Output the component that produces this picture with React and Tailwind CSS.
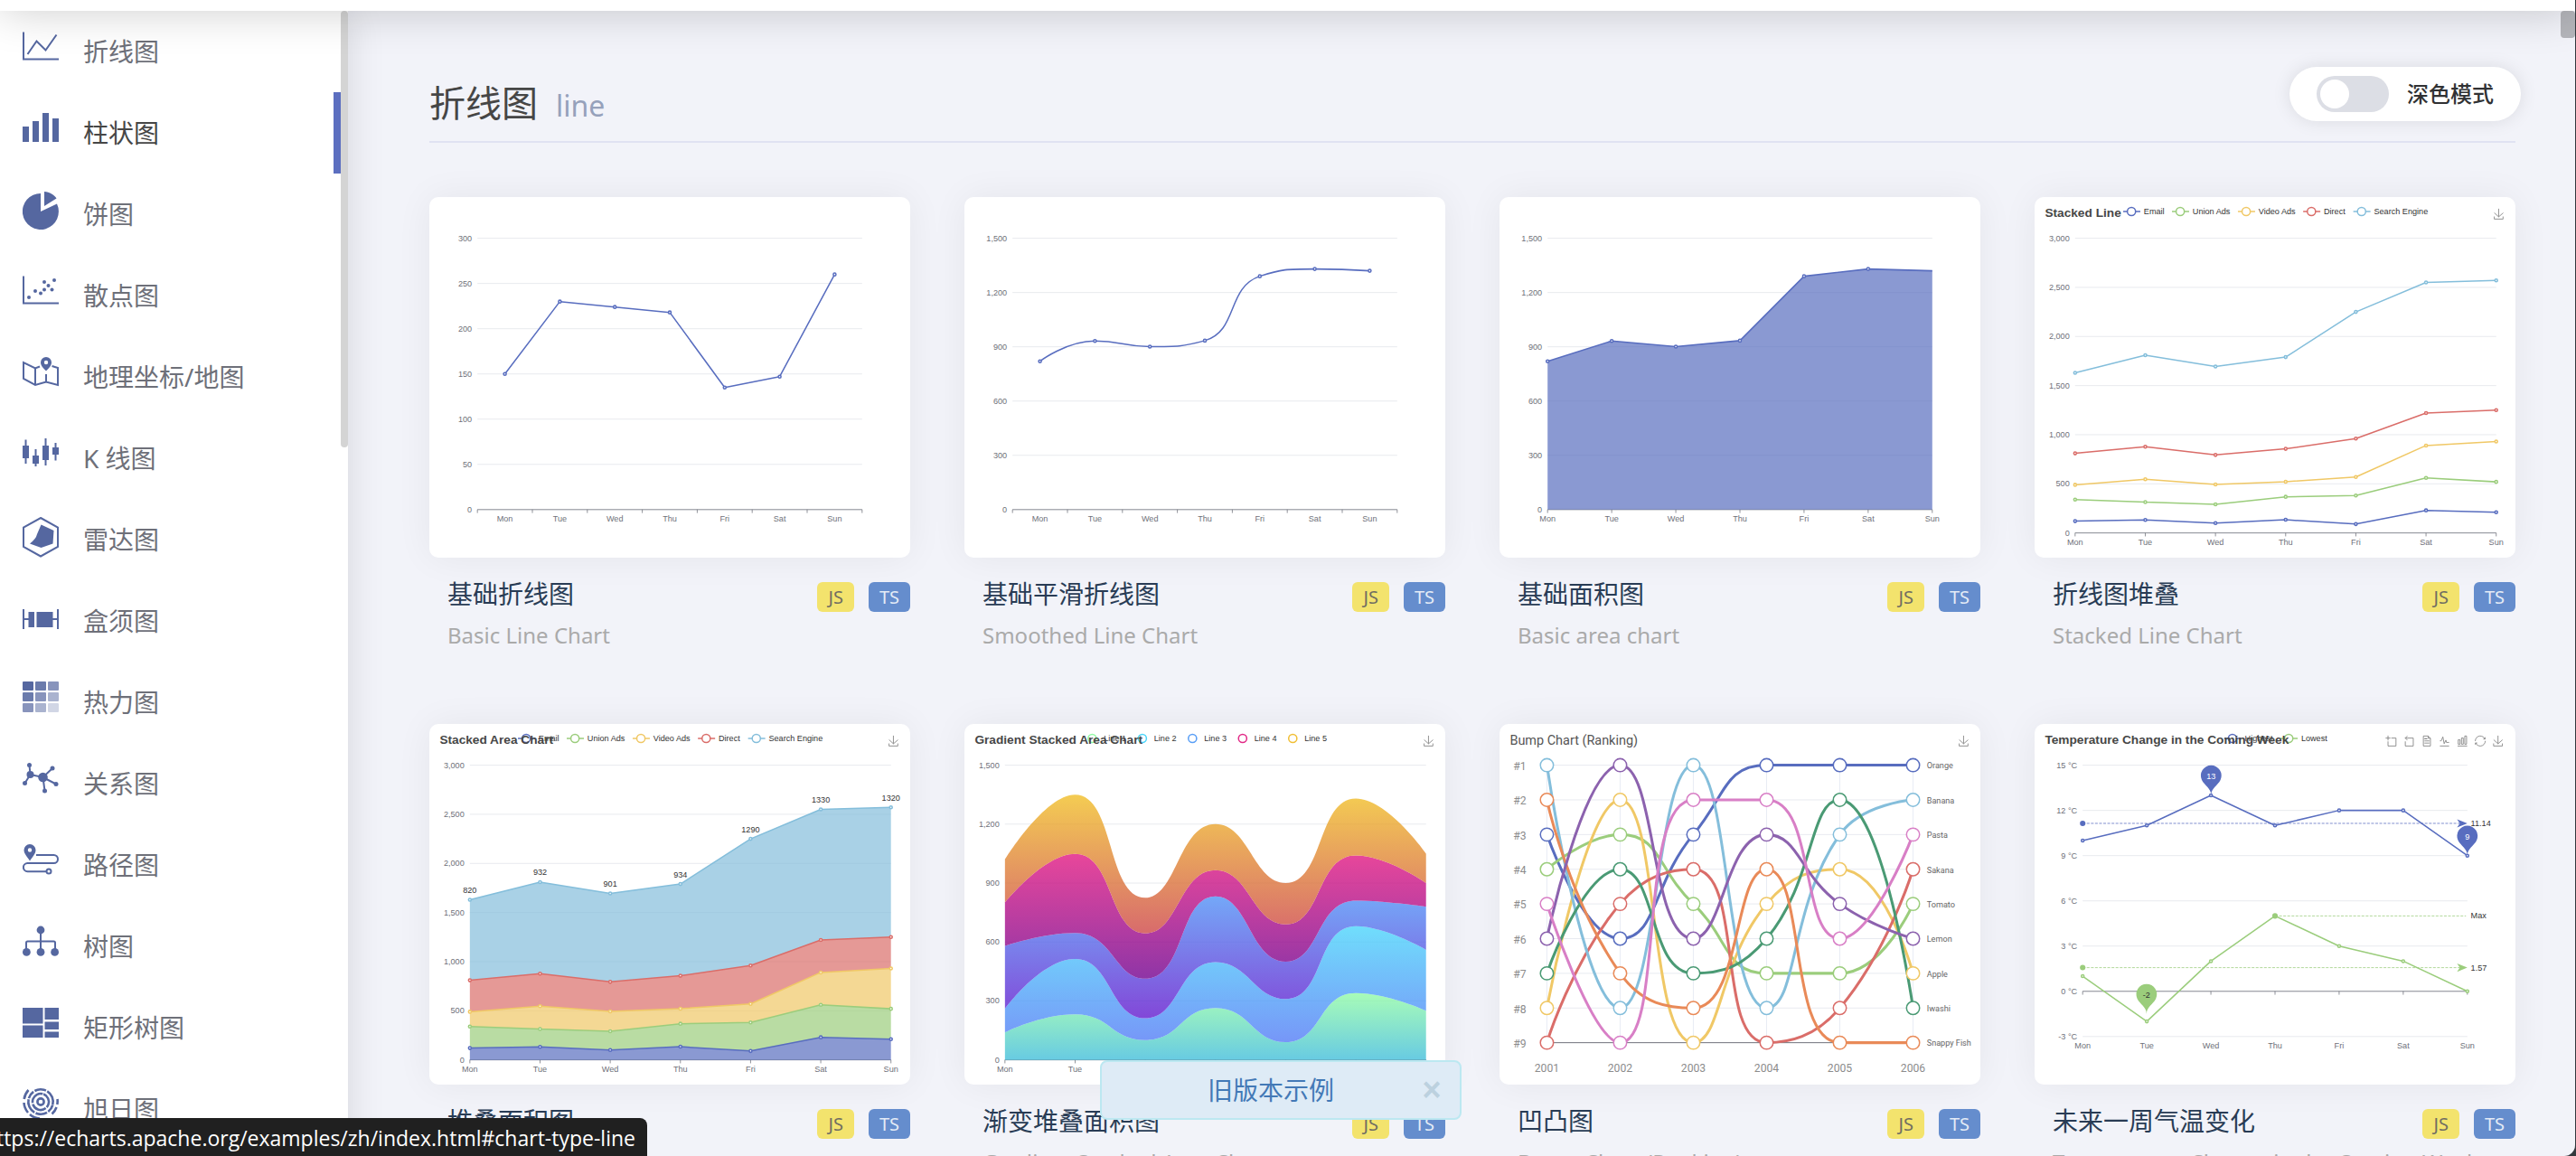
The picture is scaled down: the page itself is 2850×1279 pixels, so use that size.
import React from "react";

const DAYS = ["Mon", "Tue", "Wed", "Thu", "Fri", "Sat", "Sun"];
const COLORS = ["#586dbf", "#9bcd7c", "#f0c866", "#da6d69", "#84bedb", "#4a9a74", "#e98a58", "#8c62ae", "#d87fc6"];

const STACK = [
  { name: "Email", x: 129, data: [120, 132, 101, 134, 90, 230, 210] },
  { name: "Union Ads", x: 200, data: [220, 182, 191, 234, 290, 330, 310] },
  { name: "Video Ads", x: 296, data: [150, 232, 201, 154, 190, 330, 410] },
  { name: "Direct", x: 391, data: [320, 332, 301, 334, 390, 330, 320] },
  { name: "Search Engine", x: 464, data: [820, 932, 901, 934, 1290, 1330, 1320] },
];

const GRADIENT = [
  { name: "Line 1", color: "#92fba6", from: "rgb(146,251,166)", to: "rgb(66,190,219)", data: [140, 232, 101, 264, 90, 340, 250] },
  { name: "Line 2", color: "#4cd5fb", from: "rgb(76,213,251)", to: "rgb(84,124,246)", data: [120, 282, 111, 234, 220, 340, 310] },
  { name: "Line 3", color: "#5a9ff6", from: "rgb(81,146,246)", to: "rgb(99,25,206)", data: [320, 132, 201, 334, 190, 130, 220] },
  { name: "Line 4", color: "#e22a87", from: "rgb(226,24,129)", to: "rgb(115,2,144)", data: [220, 402, 231, 134, 190, 230, 120] },
  { name: "Line 5", color: "#f1bf36", from: "rgb(241,191,39)", to: "rgb(206,70,71)", data: [220, 302, 181, 234, 210, 290, 150] },
];

const RANKING = [
  { name: "Orange", color: COLORS[0], data: [3, 6, 3, 1, 1, 1] },
  { name: "Tomato", color: COLORS[1], data: [4, 3, 5, 7, 7, 5] },
  { name: "Apple", color: COLORS[2], data: [8, 2, 9, 5, 4, 7] },
  { name: "Sakana", color: COLORS[3], data: [9, 5, 4, 9, 8, 4] },
  { name: "Banana", color: COLORS[4], data: [1, 8, 1, 8, 3, 2] },
  { name: "Iwashi", color: COLORS[5], data: [7, 4, 7, 6, 2, 8] },
  { name: "Snappy Fish", color: COLORS[6], data: [2, 7, 8, 4, 9, 9] },
  { name: "Lemon", color: COLORS[7], data: [6, 1, 6, 3, 5, 6] },
  { name: "Pasta", color: COLORS[8], data: [5, 9, 2, 2, 6, 3] },
];

// paths are drawn on a 60 unit canvas
const TOOLS = {
  zoom: "M0,13.5h26.9 M13.5,26.9V0 M32.1,13.5H58V58H13.5 V32.1",
  back: "M22,1.4L9.9,13.5l12.3,12.3 M10.3,13.5H54.9v44.6 H10.3v-26",
  dataView: "M17.5,17.3H33 M17.5,17.3H33 M45.4,29.5h-28 M11.5,2v56H51V14.8L38.4,2H11.5z M38.4,2.2v12.7H51 M45.4,41.7h-28",
  line: "M4.1,28.9h7.1l9.3-22l7.4,38l9.7-19.7l3,12.8h14.9M4.1,58h51.4",
  bar: "M6.7,22.9h10V48h-10V22.9zM24.9,13h10v35h-10V13zM43.2,2h10v46h-10V2zM3.1,58h53.7",
  restore: "M47,18.9h9.8V8.7 M56.3,20.1 C52.1,9,40.5,0.6,26.8,2.1C12.6,3.7,1.6,16.2,2.1,30.6 M13,41.1H3.1v10.2 M3.7,39.9c4.2,11.1,15.8,19.5,29.5,18 c14.2-1.6,25.2-14.1,24.7-28.5",
  save: "M4.7,22.9L29.3,45.5L54.7,23.4M4.6,43.6L4.6,58L53.8,58L53.8,43.6M29.2,45.1L29.2,0",
};

const clamp = (v, a, b) => Math.min(Math.max(v, Math.min(a, b)), Math.max(a, b));

function straight(points) {
  return points.map((p) => p.join(",")).join("L");
}

// bezier segments through all points, control points never leave the segment's box
function smooth(points, s = 0.5) {
  let d = points[0].join(",");
  let c0 = points[0];
  for (let i = 1; i < points.length; i++) {
    const [px, py] = points[i - 1];
    const [x, y] = points[i];
    let c1 = [x, y];
    let next = [x, y];
    if (i < points.length - 1) {
      const [nx, ny] = points[i + 1];
      const lenPrev = Math.hypot(x - px, y - py);
      const lenNext = Math.hypot(nx - x, ny - y);
      const ratio = lenNext / (lenNext + lenPrev);
      next = [clamp(x + (nx - px) * s * ratio, x, nx), clamp(y + (ny - py) * s * ratio, y, ny)];
      c1 = [x - ((next[0] - x) * lenPrev) / lenNext, y - ((next[1] - y) * lenPrev) / lenNext];
      c1 = [clamp(c1[0], px, x), clamp(c1[1], py, y)];
      next = [x + ((x - c1[0]) * lenNext) / lenPrev, y + ((y - c1[1]) * lenNext) / lenPrev];
    }
    d += `C${c0.join(",")} ${c1.join(",")} ${x},${y}`;
    c0 = next;
  }
  return d;
}

function stackPoints(series, toX, toY) {
  const sum = DAYS.map(() => 0);
  return series.map((item) => {
    return item.data.map((v, i) => {
      sum[i] += v;
      return [toX(i), toY(sum[i])];
    });
  });
}

function Chart({ label, children }) {
  return (
    <svg viewBox="0 0 700 525" role="img" aria-label={label}
      className="block w-full bg-white rounded-[10px] shadow-[0_0_40px_rgba(0,0,0,0.06)] font-['Liberation_Sans',sans-serif] text-[12px]">
      {children}
    </svg>
  );
}

function Title({ children }) {
  return <text x="15" y="29" fill="#464646" className="text-[18px] font-bold">{children}</text>;
}

function Tool({ name, x }) {
  return (
    <g transform={`translate(${x} 17) scale(0.26)`}>
      <path d={TOOLS[name]} fill="none" stroke="#777" strokeWidth="4" />
    </g>
  );
}

function Axes({ left, right, top, bottom, labels, gap, zero }) {
  const step = (bottom - top) / (labels.length - 1);
  const axisY = zero || bottom;
  const count = gap ? DAYS.length : DAYS.length - 1;
  const band = (right - left) / count;
  return (
    <g>
      {labels.map((text, i) => (
        <g key={text}>
          <path d={`M${left} ${bottom - i * step}H${right}`} stroke="#e8eaee" strokeWidth="1.3" />
          <text x={left - 8} y={bottom - i * step + 4} textAnchor="end" fill="#6e7079">{text}</text>
        </g>
      ))}
      <path d={`M${left} ${axisY}H${right}`} stroke="#6e7079" />
      {Array.from({ length: count + 1 }, (_, i) => (
        <path key={i} d={`M${left + i * band} ${axisY}v5`} stroke="#6e7079" />
      ))}
      {DAYS.map((day, i) => (
        <text key={day} x={left + (gap ? i + 0.5 : i) * band} y={bottom + 17} textAnchor="middle" fill="#6e7079">{day}</text>
      ))}
    </g>
  );
}

function Line({ points, color, path = straight, hideLast }) {
  const dots = hideLast ? points.slice(0, -1) : points;
  return (
    <g>
      <path d={"M" + path(points)} fill="none" stroke={color} strokeWidth="2" strokeLinejoin="bevel" />
      {dots.map(([x, y]) => <circle key={x} cx={x} cy={y} r="2" fill="#fff" stroke={color} strokeWidth="2" />)}
    </g>
  );
}

function LegendItem({ x, color, name }) {
  return (
    <g>
      <path d={`M${x} 21h25`} stroke={color} strokeWidth="2" />
      <circle cx={x + 12} cy="21" r="6" fill="#fff" stroke={color} strokeWidth="2" />
      <text x={x + 30} y="25" fill="#333">{name}</text>
    </g>
  );
}

function BasicLine() {
  const data = [150, 230, 224, 218, 135, 147, 260];
  return (
    <Chart label="Basic Line Chart">
      <Axes left={70} right={630} top={60} bottom={455} labels={["0", "50", "100", "150", "200", "250", "300"]} gap />
      <Line points={data.map((v, i) => [110 + i * 80, 455 - (v / 300) * 395])} color={COLORS[0]} />
    </Chart>
  );
}

const WEEK = [820, 932, 901, 934, 1290, 1330, 1320];

function SmoothLine() {
  return (
    <Chart label="Smoothed Line Chart">
      <Axes left={70} right={630} top={60} bottom={455} labels={["0", "300", "600", "900", "1,200", "1,500"]} gap />
      <Line points={WEEK.map((v, i) => [110 + i * 80, 455 - (v / 1500) * 395])} color={COLORS[0]} path={smooth} />
    </Chart>
  );
}

function BasicArea() {
  const points = WEEK.map((v, i) => [70 + (i * 560) / 6, 455 - (v / 1500) * 395]);
  return (
    <Chart label="Basic area chart">
      <Axes left={70} right={630} top={60} bottom={455} labels={["0", "300", "600", "900", "1,200", "1,500"]} />
      <path d={`M70,455L${straight(points)}L630,455Z`} fill={COLORS[0]} fillOpacity="0.7" />
      <Line points={points} color={COLORS[0]} hideLast />
    </Chart>
  );
}

const stackX = (i) => 59 + (i * 613) / 6;
const THOUSANDS = ["0", "500", "1,000", "1,500", "2,000", "2,500", "3,000"];

function StackedLine() {
  const lines = stackPoints(STACK, stackX, (v) => 489 - (v / 3000) * 429);
  return (
    <Chart label="Stacked Line Chart">
      <Axes left={59} right={672} top={60} bottom={489} labels={THOUSANDS} />
      {lines.map((points, i) => <Line key={i} points={points} color={COLORS[i]} />)}
      {STACK.map((s, i) => <LegendItem key={s.name} x={s.x} color={COLORS[i]} name={s.name} />)}
      <Title>Stacked Line</Title>
      <Tool name="save" x={668} />
    </Chart>
  );
}

function StackedArea() {
  const lines = stackPoints(STACK, stackX, (v) => 489 - (v / 3000) * 429);
  return (
    <Chart label="Stacked area chart">
      <Axes left={59} right={672} top={60} bottom={489} labels={THOUSANDS} />
      {lines.map((points, i) => {
        const base = i ? [...lines[i - 1]].reverse() : [[672, 489], [59, 489]];
        return <path key={i} d={`M${straight(points)}L${straight(base)}Z`} fill={COLORS[i]} fillOpacity="0.7" />;
      })}
      {lines.map((points, i) => <Line key={i} points={points} color={COLORS[i]} />)}
      {lines[4].map(([x, y], i) => (
        <text key={i} x={x} y={y - 10} textAnchor="middle" fill="#333">{STACK[4].data[i]}</text>
      ))}
      {STACK.map((s, i) => <LegendItem key={s.name} x={s.x} color={COLORS[i]} name={s.name} />)}
      <Title>Stacked Area Chart</Title>
      <Tool name="save" x={668} />
    </Chart>
  );
}

function GradientArea() {
  const lines = stackPoints(GRADIENT, stackX, (v) => 489 - (v / 1500) * 429);
  return (
    <Chart label="Gradient Stacked Area Chart">
      <defs>
        {GRADIENT.map((s, i) => (
          <linearGradient key={i} id={"area" + i} x1="0" y1="0" x2="0" y2="1">
            <stop offset="0" stopColor={s.from} />
            <stop offset="1" stopColor={s.to} />
          </linearGradient>
        ))}
      </defs>
      <Axes left={59} right={672} top={60} bottom={489} labels={["0", "300", "600", "900", "1,200", "1,500"]} />
      {lines.map((points, i) => {
        const base = i ? smooth([...lines[i - 1]].reverse()) : "672,489L59,489";
        return <path key={i} d={`M${smooth(points)}L${base}Z`} fill={`url(#area${i})`} fillOpacity="0.8" />;
      })}
      {GRADIENT.map((s, i) => (
        <g key={s.name}>
          <circle cx={186 + i * 73} cy="21" r="6" fill="#fff" stroke={s.color} strokeWidth="2" />
          <text x={203 + i * 73} y="25" fill="#333">{s.name}</text>
        </g>
      ))}
      <Title>Gradient Stacked Area Chart</Title>
      <Tool name="save" x={668} />
    </Chart>
  );
}

function Bump() {
  const toX = (i) => 69 + i * 106.6;
  const toY = (rank) => 60 + (rank - 1) * 50.5;
  return (
    <Chart label="Bump Chart (Ranking)">
      <g className="font-['Roboto',sans-serif]">
        <text x="15" y="30" fill="#555" className="text-[19px]">Bump Chart (Ranking)</text>
        {RANKING.map((s, i) => (
          <g key={i}>
            <path d={`M69 ${toY(i + 1)}H602`} stroke={i === 8 ? "#6e7079" : "#e8eaf0"} strokeWidth="1.3" />
            <text x="20" y={toY(i + 1) + 7} fill="#8c8c8c" className="text-[16px]">#{i + 1}</text>
          </g>
        ))}
        {[0, 1, 2, 3, 4, 5].map((i) => (
          <g key={i}>
            <path d={`M${toX(i)} 60V464`} stroke="#e0e6f1" />
            <text x={toX(i)} y="507" textAnchor="middle" fill="#8c8c8c" className="text-[16px]">{2001 + i}</text>
          </g>
        ))}
        {RANKING.map((s) => {
          const points = s.data.map((rank, i) => [toX(i), toY(rank)]);
          return (
            <g key={s.name}>
              <path d={"M" + smooth(points)} fill="none" stroke={s.color} strokeWidth="4" />
              <text x="622" y={points[5][1] + 5} fill="#666">{s.name}</text>
            </g>
          );
        })}
        {RANKING.map((s) => s.data.map((rank, i) => (
          <circle key={s.name + i} cx={toX(i)} cy={toY(rank)} r="9.5" fill="#fff" stroke={s.color} strokeWidth="2" />
        )))}
      </g>
      <Tool name="save" x={668} />
    </Chart>
  );
}

function Pin({ x, y, color, text, fill = "#fff" }) {
  return (
    <g transform={`translate(${x} ${y})`}>
      <path d="M-13.55-22.17A15 15 0 1 1 13.55-22.17C9.69-14.04 0-10.5 0 0C0-10.5-9.69-14.04-13.55-22.17Z" fill={color} />
      <text y="-23" textAnchor="middle" fill={fill}>{text}</text>
    </g>
  );
}

function MarkLine({ x = 70, y, color, text, arrow }) {
  return (
    <g>
      <circle cx={x} cy={y} r="4" fill={color} />
      <path d={`M${x} ${y}H628`} stroke={color} strokeDasharray="4 2" />
      {arrow && <path d={`M630 ${y}l-15-6l4 6l-4 6z`} fill={color} />}
      <text x="635" y={y + 4} fill="#333">{text}</text>
    </g>
  );
}

function Temperature() {
  const toY = (v) => 455 - ((v + 3) / 18) * 395;
  const line = (data) => data.map((v, i) => [70 + (i * 560) / 6, toY(v)]);
  return (
    <Chart label="Temperature Change in the Coming Week">
      <Axes left={70} right={630} top={60} bottom={455} zero={toY(0)}
        labels={["-3 °C", "0 °C", "3 °C", "6 °C", "9 °C", "12 °C", "15 °C"]} />
      <Line points={line([10, 11, 13, 11, 12, 12, 9])} color={COLORS[0]} />
      <Line points={line([1, -2, 2, 5, 3, 2, 0])} color={COLORS[1]} />
      <MarkLine y={toY(11.14)} color={COLORS[0]} text="11.14" arrow />
      <MarkLine y={toY(1.57)} color={COLORS[1]} text="1.57" arrow />
      <MarkLine x={350} y={toY(5)} color={COLORS[1]} text="Max" />
      <Pin x={257} y={toY(13)} color={COLORS[0]} text="13" />
      <Pin x={630} y={toY(9)} color={COLORS[0]} text="9" />
      <Pin x={163} y={toY(-1.5)} color={COLORS[1]} text="-2" fill="#333" />
      <LegendItem x={276} color={COLORS[0]} name="Highest" />
      <LegendItem x={358} color={COLORS[1]} name="Lowest" />
      <Title>Temperature Change in the Coming Week</Title>
      {["zoom", "back", "dataView", "line", "bar", "restore", "save"].map((name, i) => (
        <Tool key={name} name={name} x={511 + i * 26} />
      ))}
    </Chart>
  );
}

const CHARTS = [
  { title: "基础折线图", desc: "Basic Line Chart", Pic: BasicLine },
  { title: "基础平滑折线图", desc: "Smoothed Line Chart", Pic: SmoothLine },
  { title: "基础面积图", desc: "Basic area chart", Pic: BasicArea },
  { title: "折线图堆叠", desc: "Stacked Line Chart", Pic: StackedLine },
  { title: "堆叠面积图", desc: "Stacked area chart", Pic: StackedArea },
  { title: "渐变堆叠面积图", desc: "Gradient Stacked Area Chart", Pic: GradientArea },
  { title: "凹凸图", desc: "Bump Chart (Ranking)", Pic: Bump },
  { title: "未来一周气温变化", desc: "Temperature Change in the Coming Week", Pic: Temperature },
];

const CELLS = [1, 0.87, 0.7, 0.87, 0.7, 0.5, 0.7, 0.5, 0.27];

const NAV = [
  {
    id: "line", text: "折线图",
    icon: <path d="M1 3.5V33.5H40M5.5 28L15.5 13.5L25.5 23.5L37.5 6.5" fill="none" stroke="currentColor" strokeWidth="2" />,
  },
  {
    id: "bar", text: "柱状图", active: true,
    icon: <path d="M0 18h7v17H0zM11 12h7v23h-7zM22 3h7v32h-7zM33 9h7v26h-7z" />,
  },
  {
    id: "pie", text: "饼图",
    icon: <path d="M20 22V2A20 20 0 1 0 38 13.5ZM24 16V0C30 .5 35 3.5 37.5 7.5Z" />,
  },
  {
    id: "scatter", text: "散点图",
    icon: (
      <>
        <path d="M1 3.5V33.5H40" fill="none" stroke="currentColor" strokeWidth="2" />
        {[[7, 27], [14, 20], [20, 22.5], [24, 18.5], [24, 10], [28.5, 14], [32.5, 18.5], [35, 8]].map(([x, y]) => (
          <circle key={x + "-" + y} cx={x} cy={y} r="2" />
        ))}
      </>
    ),
  },
  {
    id: "map", text: "地理坐标/地图",
    icon: (
      <>
        <path d="M19 13.5L14 15.5L1 9V27L14 34L26 30.5L39 34V15L32.5 13M14 15.5V34M26 22V30.5" fill="none" stroke="currentColor" strokeWidth="2" />
        <path fillRule="evenodd" d="M26 18.5C23 15.5 20 12.5 20 9A6 6 0 0 1 32 9C32 12.5 29 15.5 26 18.5ZM26 6.8A2.2 2.2 0 1 0 26 11.2A2.2 2.2 0 1 0 26 6.8Z" />
      </>
    ),
  },
  {
    id: "candlestick", text: "K 线图",
    icon: (
      <>
        <path d="M0 11h7v14H0zM11 22h7v9h-7zM22 11h7v16h-7zM33 13h7v8h-7z" />
        <path d="M3.5 4.5V31M14.5 15V34M25.5 3V33M36.5 8V27.5" stroke="currentColor" strokeWidth="2" />
      </>
    ),
  },
  {
    id: "radar", text: "雷达图",
    icon: (
      <>
        <path d="M20 1L39 11.5V33L20 43.5L1 33V11.5Z" fill="none" stroke="currentColor" strokeWidth="2" />
        <path d="M20.5 8.5L34.5 15L33.5 29.5L20.5 34L8 29.5Q15 24 16 19Z" />
      </>
    ),
  },
  {
    id: "boxplot", text: "盒须图",
    icon: <path d="M0 12h2v10h4.5v-7h6.5v17H6.5v-8H2v10H0zM15.5 15H33.5v7H38v-10h2v22h-2v-10h-4.5v8H15.5z" />,
  },
  {
    id: "heatmap", text: "热力图",
    icon: CELLS.map((o, i) => (
      <rect key={i} x={(i % 3) * 14} y={2 + Math.floor(i / 3) * 12} width="12" height="10" rx="1" opacity={o} />
    )),
  },
  {
    id: "graph", text: "关系图",
    icon: (
      <>
        <path d="M7.5 4.5L8.5 15L2.5 24.5M8.5 15L22.5 18L33 8M22.5 18L37 25.5M22.5 18L24.5 33" fill="none" stroke="currentColor" strokeWidth="2" />
        {[[7.5, 4.5, 2.5], [8.5, 15, 4], [2.5, 24.5, 2.5], [22.5, 18, 5.3], [33, 8, 2.5], [37, 25.5, 2.5], [24.5, 33, 2.5]].map(([x, y, r]) => (
          <circle key={x + "-" + y} cx={x} cy={y} r={r} />
        ))}
      </>
    ),
  },
  {
    id: "lines", text: "路径图",
    icon: (
      <>
        <path fillRule="evenodd" d="M8 20.5C5 16 1.5 12.5 1.5 8.5A6.5 6.5 0 0 1 14.5 8.5C14.5 12.5 11 16 8 20.5ZM8 6.3A2.2 2.2 0 1 0 8 10.7A2.2 2.2 0 1 0 8 6.3Z" />
        <path d="M15 14H34.5A4.5 4.5 0 0 1 34.5 23H5.5A4.6 4.6 0 0 0 5.5 32.2H26.5" fill="none" stroke="currentColor" strokeWidth="2" />
        <circle cx="29" cy="32" r="2.5" fill="none" stroke="currentColor" strokeWidth="2" />
      </>
    ),
  },
  {
    id: "tree", text: "树图",
    icon: (
      <>
        <path d="M20 7V31M4 31V21Q4 19.5 5.5 19.5H34.5Q36 19.5 36 21V31" fill="none" stroke="currentColor" strokeWidth="2" />
        {[[20, 7], [4.4, 31.4], [20, 31.4], [35.6, 31.4]].map(([x, y]) => <circle key={x + "-" + y} cx={x} cy={y} r="4.4" />)}
      </>
    ),
  },
  {
    id: "treemap", text: "矩形树图",
    icon: <path d="M0 3h22.5v17.5H0zM24.5 3H40v13H24.5zM24.5 18.5H40V27H24.5zM0 22.5h22.5V36H0zM24.5 29.5H40V36H24.5z" />,
  },
  {
    id: "sunburst", text: "旭日图",
    icon: (
      <g fill="none" stroke="currentColor" strokeWidth="2.6">
        <circle cx="20" cy="17" r="3.6" />
        <circle cx="20" cy="17" r="9" strokeDasharray="17.5 1.4" transform="rotate(-70 20 17)" />
        <circle cx="20" cy="17" r="13.7" strokeDasharray="9 1.5 13 1.5 17 1.2" transform="rotate(15 20 17)" />
        <path d="M6.5 4A18.5 18.5 0 0 0 1.7 14M1.5 18A18.5 18.5 0 0 0 6 29M8 31A18.5 18.5 0 0 0 19 35.5M38.5 14A18.5 18.5 0 0 1 38.3 20M37.5 23A18.5 18.5 0 0 1 32.5 30.5" />
      </g>
    ),
  },
];

function Sidebar() {
  return (
    <aside className="relative z-10 shrink-0 w-[385px] bg-white shadow-[0_0_40px_rgba(0,0,0,0.12)]">
      <nav className="mr-2">
        {NAV.map((item) => (
          <a key={item.id} href={"#chart-type-" + item.id}
            className={"flex items-center gap-[27px] h-[90px] pl-[25px] text-[28px] border-r-8 " +
              (item.active ? "border-[#5c6fc0] text-[#464646]" : "border-transparent text-[#6e7079]")}>
            <svg viewBox="0 0 40 50" className="w-10 h-[50px] text-[#5567a0] fill-current" aria-hidden="true">{item.icon}</svg>
            {item.text}
          </a>
        ))}
      </nav>
      <div className="absolute right-0 top-0 w-2 h-[483px] rounded-full bg-[#d4d4d4]" />
    </aside>
  );
}

function Card({ title, desc, Pic }) {
  return (
    <a href="#editor" className="block min-w-0">
      <Pic />
      <div className="flex items-end justify-between mt-5 pl-5">
        <h4 className="text-[28px] leading-10 text-[#293c55] whitespace-nowrap">{title}</h4>
        <div className="flex gap-4 text-[20px] leading-[33px]">
          <span className="px-3 rounded-md bg-[#f3e36d] text-[#6f6d62]">JS</span>
          <span className="px-3 rounded-md bg-[#658dcd] text-[#e4ebf6]">TS</span>
        </div>
      </div>
      <div className="mt-2 pl-5 text-[24px] leading-9 text-[#aaa] whitespace-nowrap overflow-hidden">{desc}</div>
    </a>
  );
}

function DarkSwitch() {
  return (
    <label className="absolute right-[60px] top-[62px] flex items-center h-[60px] px-[30px] rounded-full bg-white shadow-[0_0_20px_rgba(0,0,0,0.1)] text-[24px] font-medium text-[#303133] cursor-pointer">
      <input type="checkbox" className="peer sr-only" />
      <span className="flex items-center w-20 h-10 px-1 mr-5 rounded-full bg-[#dcdee5] peer-checked:justify-end peer-checked:bg-[#5470c6]">
        <span className="size-8 rounded-full bg-white" />
      </span>
      深色模式
    </label>
  );
}

function OldVersion() {
  const [open, setOpen] = React.useState(true);
  if (!open) return null;

  return (
    <div className="absolute bottom-10 left-0 right-4 z-20 flex justify-center">
      <div className="flex items-center w-[400px] h-[66px] pr-5 rounded-lg border-2 border-[#bce8f1] bg-[#deebf6]">
        <a href="#old" className="flex-1 pl-5 text-center text-[28px] text-[#4379b6]">旧版本示例</a>
        <button type="button" aria-label="关闭" onClick={() => setOpen(false)}
          className="font-['Liberation_Sans',sans-serif] text-[36px] leading-9 font-bold text-[#bcd1df] cursor-pointer">×</button>
      </div>
    </div>
  );
}

export default function App() {
  return (
    <div className="h-screen pr-px bg-[#33383d] font-['Noto_Sans','Noto_Sans_CJK_SC',sans-serif]">
      <div className="relative flex flex-col h-full overflow-hidden rounded-br-xl bg-[#f2f3f9]">
        <header className="relative z-20 shrink-0 h-[120px] -mt-[108px] bg-white shadow-[0_0_50px_rgba(0,0,0,0.2)]" />
        <div className="relative flex flex-1 min-h-0">
          <Sidebar />
          <main className="flex-1 min-w-0 overflow-hidden pt-[72px] pl-[90px] pr-[66px]">
            <h2 className="flex items-baseline gap-5 pb-3 border-b-2 border-[#e0e2f2] text-[40px] leading-[60px] text-[#464646]">
              折线图
              <span className="text-[32px] leading-10 text-[#96a1bb]">line</span>
            </h2>
            <div className="grid grid-cols-4 gap-x-[60px] gap-y-20 mt-[60px]">
              {CHARTS.map((chart) => <Card key={chart.title} {...chart} />)}
            </div>
          </main>
          <DarkSwitch />
          <div className="absolute right-0 top-0 w-4 h-[30px] rounded-sm bg-[#b4b5ba]" />
        </div>
        <OldVersion />
        <div className="absolute left-0 bottom-0 z-30 flex justify-end w-[716px] h-[42px] pr-[13px] rounded-tr-lg bg-[#202020] font-['Open_Sans',sans-serif] text-[23px] leading-[44px] text-white whitespace-nowrap overflow-hidden">
          https://echarts.apache.org/examples/zh/index.html#chart-type-line
        </div>
      </div>
    </div>
  );
}
